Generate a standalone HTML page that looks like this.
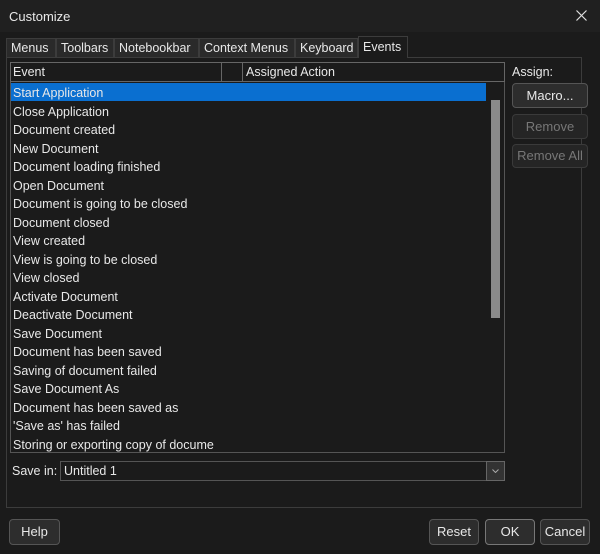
<!DOCTYPE html><html><head><style>
body{margin:0;width:600px;height:554px;background:#1b1b1b;font-family:"Liberation Sans",sans-serif;font-size:12.5px;color:#e8e8e8;position:relative;overflow:hidden}
.a{position:absolute}
.tab{position:absolute;top:38px;height:19px;background:#2a2a2a;border:1px solid #3c3c3c;border-bottom:none;line-height:19px;padding-left:4px;box-sizing:border-box}
.btn{position:absolute;background:#2d2d2d;border:1px solid #555;border-radius:4px;box-sizing:border-box;text-align:center;color:#e8e8e8;font-size:13px}
.row{position:absolute;left:13px;height:18px;line-height:18px}
</style></head><body>
<div class="a" style="left:0;top:0;width:600px;height:32px;background:#202020"></div>
<div class="a" style="left:9px;top:9px;font-size:13px">Customize</div>
<svg class="a" style="left:576px;top:10px" width="11" height="11"><path d="M0.5 0.5L10.5 10.5M10.5 0.5L0.5 10.5" stroke="#e0e0e0" stroke-width="1.2"/></svg>
<div class="a" style="left:6px;top:57px;width:576px;height:451px;border:1px solid #3c3c3c;box-sizing:border-box"></div>
<div class="tab" style="left:6px;width:50px">Menus</div>
<div class="tab" style="left:56px;width:58px">Toolbars</div>
<div class="tab" style="left:114px;width:85px">Notebookbar</div>
<div class="tab" style="left:199px;width:96px">Context Menus</div>
<div class="tab" style="left:295px;width:63px">Keyboard</div>
<div class="tab" style="left:358px;top:36px;height:22px;width:50px;background:#1b1b1b;line-height:21px">Events</div>
<div class="a" style="left:10px;top:62px;width:495px;height:391px;border:1px solid #555;box-sizing:border-box;background:#1b1b1b"></div>
<div class="a" style="left:10px;top:62px;width:495px;height:20px;border:1px solid #666;box-sizing:border-box"></div>
<div class="a" style="left:221px;top:62px;width:1px;height:20px;background:#666"></div>
<div class="a" style="left:242px;top:62px;width:1px;height:20px;background:#666"></div>
<div class="a" style="left:13px;top:65px">Event</div>
<div class="a" style="left:246px;top:65px">Assigned Action</div>
<div class="a" style="left:11px;top:83px;width:475px;height:18px;background:#0a6fd0"></div>
<div class="a" style="left:491px;top:100px;width:9px;height:218px;background:#8a8a8a"></div>
<div class="row" style="top:84px">Start Application</div>
<div class="row" style="top:102.5px">Close Application</div>
<div class="row" style="top:121px">Document created</div>
<div class="row" style="top:139.5px">New Document</div>
<div class="row" style="top:158px">Document loading finished</div>
<div class="row" style="top:176.5px">Open Document</div>
<div class="row" style="top:195px">Document is going to be closed</div>
<div class="row" style="top:213.5px">Document closed</div>
<div class="row" style="top:232px">View created</div>
<div class="row" style="top:250.5px">View is going to be closed</div>
<div class="row" style="top:269px">View closed</div>
<div class="row" style="top:287.5px">Activate Document</div>
<div class="row" style="top:306px">Deactivate Document</div>
<div class="row" style="top:324.5px">Save Document</div>
<div class="row" style="top:343px">Document has been saved</div>
<div class="row" style="top:361.5px">Saving of document failed</div>
<div class="row" style="top:380px">Save Document As</div>
<div class="row" style="top:398.5px">Document has been saved as</div>
<div class="row" style="top:417px">'Save as' has failed</div>
<div class="row" style="top:435.5px">Storing or exporting copy of docume</div>
<div class="a" style="left:512px;top:65px">Assign:</div>
<div class="btn" style="left:512px;top:83px;width:76px;height:25px;line-height:23px">Macro...</div>
<div class="btn" style="left:512px;top:114px;width:76px;height:25px;line-height:23px;color:#777;border-color:#3a3a3a;background:#252525">Remove</div>
<div class="btn" style="left:512px;top:144px;width:76px;height:24px;line-height:22px;color:#777;border-color:#3a3a3a;background:#252525">Remove All</div>
<div class="a" style="left:12px;top:464px">Save in:</div>
<div class="a" style="left:60px;top:461px;width:445px;height:20px;border:1px solid #555;box-sizing:border-box;line-height:18px;padding-left:3px">Untitled 1</div>
<div class="a" style="left:486px;top:461px;width:19px;height:20px;border:1px solid #666;box-sizing:border-box;background:#333"></div>
<svg class="a" style="left:492px;top:469px" width="7" height="4"><path d="M0.5 0.5L3.5 3.5L6.5 0.5" stroke="#aaa" fill="none"/></svg>
<div class="btn" style="left:9px;top:519px;width:51px;height:26px;line-height:24px">Help</div>
<div class="btn" style="left:429px;top:519px;width:50px;height:26px;line-height:24px">Reset</div>
<div class="btn" style="left:485px;top:519px;width:50px;height:26px;line-height:24px;border-color:#777">OK</div>
<div class="btn" style="left:540px;top:519px;width:50px;height:26px;line-height:24px">Cancel</div>
</body></html>
